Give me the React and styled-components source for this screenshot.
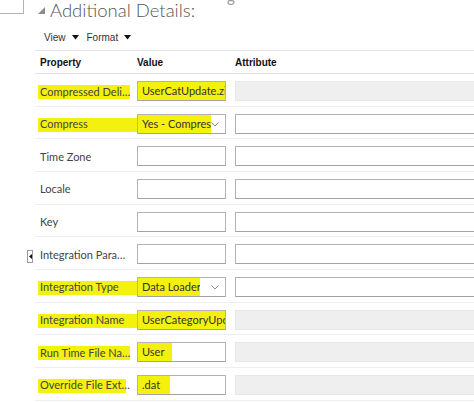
import styled, { createGlobalStyle } from "styled-components";

const GlobalStyle = createGlobalStyle`
  html, body {
    margin: 0;
    padding: 0;
    background: #fff;
  }
  body {
    font-family: "Lato", "Open Sans", sans-serif;
    color: #333;
  }
`;

const rows = [
  { label: "Compressed Deli…", mark: 92, value: "UserCatUpdate.zi", valueMark: 88, attr: "readonly" },
  { label: "Compress", mark: 99, value: "Yes - Compres", valueMark: 73, select: true, attr: "input" },
  { label: "Time Zone", attr: "input" },
  { label: "Locale", attr: "input" },
  { label: "Key", attr: "input" },
  { label: "Integration Para…", attr: "input", handle: true },
  { label: "Integration Type", mark: 99, value: "Data Loader", valueMark: 62, select: true, attr: "input" },
  { label: "Integration Name", mark: 99, value: "UserCategoryUpc", valueMark: 88, attr: "readonly" },
  { label: "Run Time File Na…", mark: 92, value: "User", valueMark: 34, attr: "readonly" },
  { label: "Override File Ext…", mark: 88, value: ".dat", valueMark: 32, attr: "readonly" },
];

function App() {
  return (
    <Page>
      <GlobalStyle />
      <TitleRow>
        <Stub />
        <Collapser width="7" height="7" viewBox="0 0 7 7">
          <polygon points="7,0 7,7 0,7" fill="#8a8a8a" />
        </Collapser>
        <Title>Additional Details:</Title>
        <Fragment>g</Fragment>
      </TitleRow>
      <Toolbar>
        <MenuButton>
          View
          <svg width="7" height="5" viewBox="0 0 7 5">
            <polygon points="0,0 7,0 3.5,4.5" fill="#111" />
          </svg>
        </MenuButton>
        <MenuButton>
          Format
          <svg width="7" height="5" viewBox="0 0 7 5">
            <polygon points="0,0 7,0 3.5,4.5" fill="#111" />
          </svg>
        </MenuButton>
      </Toolbar>
      <Row>
        <Gutter />
        <HeaderBody>
          <HeadCell>Property</HeadCell>
          <HeadCell>Value</HeadCell>
          <HeadCell>Attribute</HeadCell>
        </HeaderBody>
      </Row>
      {rows.map((r) => (
        <Row key={r.label} $h={32.67}>
          <Gutter>
            {r.handle && (
              <Handle>
                <svg width="3" height="5" viewBox="0 0 3 5">
                  <polygon points="3,0 3,5 0,2.5" fill="#111" />
                </svg>
              </Handle>
            )}
          </Gutter>
          <RowBody>
            <Label $mark={r.mark}>{r.label}</Label>
            <Field>
              {r.value && <Mark $w={r.valueMark}>{r.value}</Mark>}
              {r.select && (
                <Chevron width="8" height="5" viewBox="0 0 8 5">
                  <polyline points="0.5,0.5 4,4 7.5,0.5" fill="none" stroke="#8c8c8c" strokeWidth="1" />
                </Chevron>
              )}
            </Field>
            <AttrField $readonly={r.attr === "readonly"} />
          </RowBody>
        </Row>
      ))}
    </Page>
  );
}

export default App;

const Page = styled.div`
  width: 474px;
  height: 402px;
  overflow: hidden;
`;

const TitleRow = styled.div`
  display: flex;
  align-items: flex-start;
  height: 24px;
`;

const Stub = styled.div`
  width: 23px;
  height: 13px;
  border-right: 1px solid #b4b4b4;
  border-bottom: 1px solid #b4b4b4;
  flex-shrink: 0;
`;

const Collapser = styled.svg`
  margin: 7px 0 0 14px;
  flex-shrink: 0;
`;

const Title = styled.div`
  margin: -1px 0 0 5px;
  font-family: "Lato", sans-serif;
  font-weight: 300;
  font-size: 18.5px;
  line-height: 22px;
  color: #555;
  white-space: nowrap;
`;

const Fragment = styled.span`
  margin: -12px 0 0 32px;
  font-family: "Lato", sans-serif;
  font-size: 15px;
  line-height: 16px;
  color: #9a9a9a;
`;

const Toolbar = styled.div`
  display: flex;
  align-items: center;
  gap: 8px;
  height: 26px;
  padding-left: 44px;
`;

const MenuButton = styled.div`
  display: flex;
  align-items: center;
  gap: 6px;
  font-family: "Liberation Sans", Arial, sans-serif;
  font-size: 10px;
  color: #333;
`;

const Row = styled.div`
  display: flex;
  height: ${(p) => (p.$h ? `${p.$h}px` : "auto")};
`;

const Gutter = styled.div`
  width: 35px;
  flex-shrink: 0;
  display: flex;
  justify-content: flex-end;
  padding-top: 13px;
  box-sizing: border-box;
`;

const Handle = styled.div`
  width: 4px;
  height: 11px;
  margin-right: 2px;
  border: 1px solid #9a9a9a;
  display: flex;
  align-items: center;
  justify-content: center;
  background: #fff;
`;

const columns = "102px 98px 1fr";

const HeaderBody = styled.div`
  flex: 1;
  display: grid;
  grid-template-columns: ${columns};
  align-items: center;
  height: 24px;
  box-sizing: border-box;
  border-top: 1px solid #e6e6e6;
  border-bottom: 1px solid #e3e3e3;
`;

const HeadCell = styled.div`
  font-family: "Liberation Sans", Arial, sans-serif;
  font-weight: bold;
  font-size: 10px;
  color: #111;
  &:first-child {
    padding-left: 5px;
  }
`;

const RowBody = styled.div`
  flex: 1;
  display: grid;
  grid-template-columns: ${columns};
  align-items: start;
  padding-top: 7px;
  box-sizing: border-box;
  border-bottom: 1px solid #eeeeee;
`;

const Label = styled.div`
  height: 20px;
  display: flex;
  align-items: center;
  padding-left: 5px;
  font-size: 11px;
  color: #444;
  white-space: nowrap;
  overflow: hidden;
  ${(p) =>
    p.$mark &&
    `
    background: linear-gradient(#f4f10e, #f4f10e) no-repeat;
    background-size: ${p.$mark}px 14px;
    background-position: 3px 4px;
    border-radius: 2px;
  `}
`;

const Field = styled.div`
  position: relative;
  width: 89px;
  height: 20px;
  box-sizing: border-box;
  border: 1px solid #b3b3b3;
  border-bottom-color: #a3a3a3;
  background: #fff;
  display: flex;
  align-items: stretch;
  overflow: hidden;
`;

const Mark = styled.span`
  width: ${(p) => p.$w}px;
  flex-shrink: 0;
  background: #f4f10e;
  padding-left: 4px;
  box-sizing: border-box;
  font-size: 11px;
  line-height: 18px;
  color: #333;
  white-space: nowrap;
  overflow: hidden;
`;

const Chevron = styled.svg`
  position: absolute;
  right: 6px;
  top: 7px;
`;

const AttrField = styled.div`
  height: 20px;
  box-sizing: border-box;
  margin-right: -4px;
  ${(p) =>
    p.$readonly
      ? `
    background: #efeff0;
    border: 1px solid #e8e8ea;
  `
      : `
    background: #fff;
    border: 1px solid #b3b3b3;
    border-bottom-color: #a3a3a3;
  `}
`;
